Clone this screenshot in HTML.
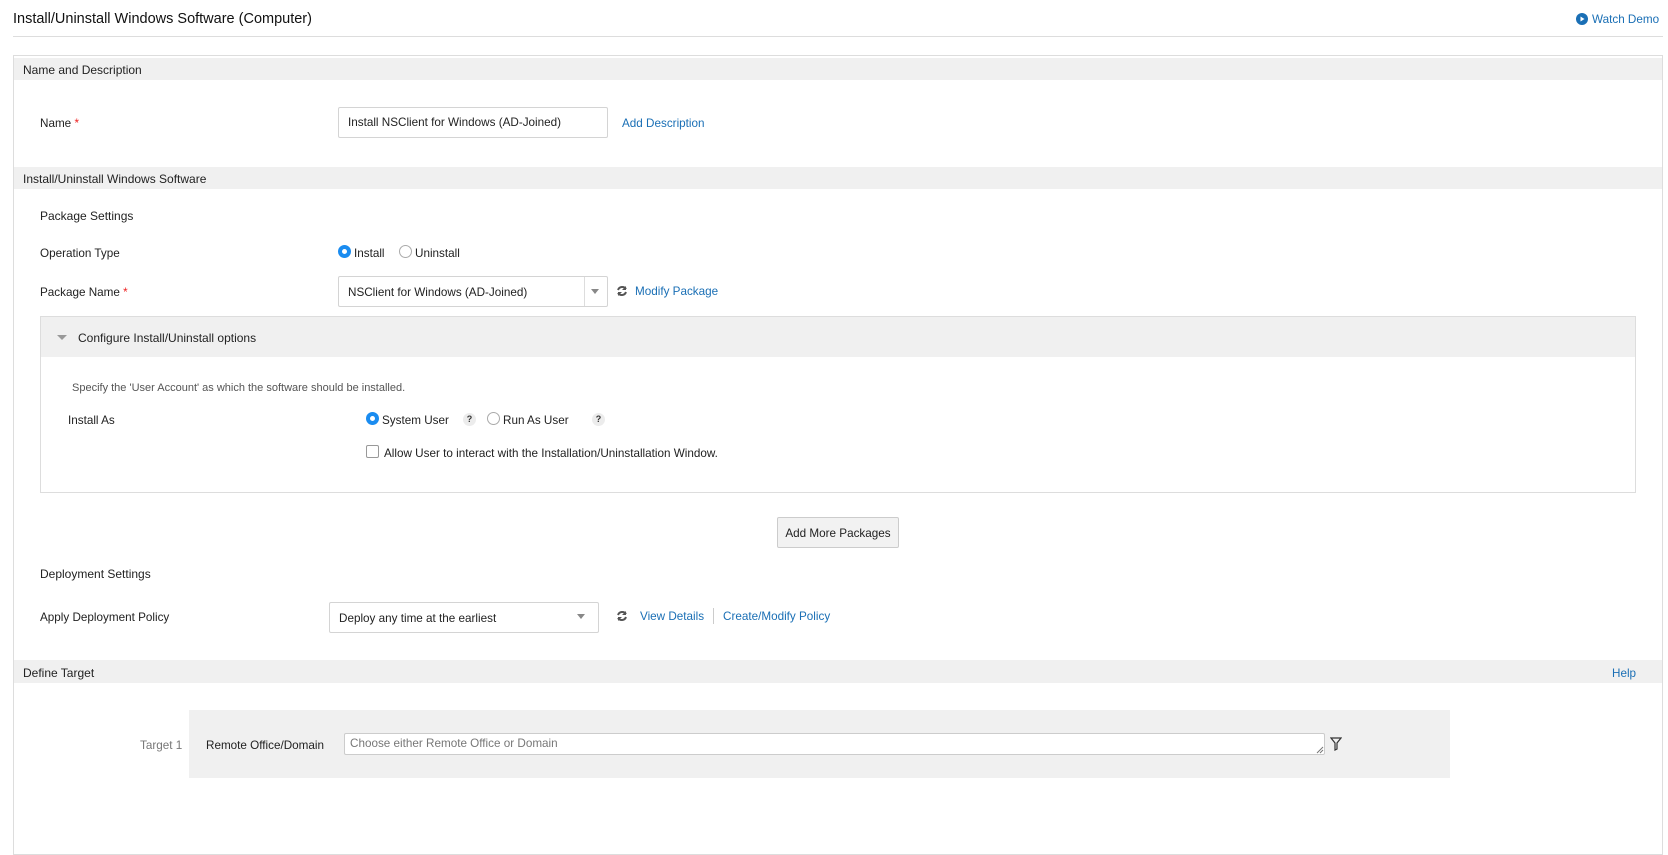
<!DOCTYPE html>
<html><head><meta charset="utf-8"><style>
*{margin:0;padding:0;box-sizing:border-box}
body{width:1668px;height:803px;overflow:hidden;background:#fff;font-family:"Liberation Sans",sans-serif;font-size:11.7px;color:#222;position:relative}
.a{position:absolute;white-space:nowrap}
.lnk{color:#1a6fb5}
.gray{background:#f0f0f0}
.inp{position:absolute;border:1px solid #d4d4d4;border-radius:2px;background:#fff}
.radio{position:absolute;width:13px;height:13px;border-radius:50%;border:1px solid #aaa;background:#fff}
.radio.on{border:4px solid #1a8cf0}
.q{position:absolute;width:13px;height:13px;border-radius:50%;background:#ececec;font-size:9px;font-weight:bold;text-align:center;line-height:13px;color:#333}
.req{color:#e22}
</style></head><body>
<div class="a" style="left:13px;top:11px;font-size:14.5px;color:#111">Install/Uninstall Windows Software (Computer)</div>
<div class="a lnk" style="left:1576px;top:13px;font-size:11.7px"><svg width="12" height="12" style="vertical-align:-2px;margin-right:4px"><circle cx="6" cy="6" r="6" fill="#1a6fb5"/><path d="M4.5 3.5 L8.5 6 L4.5 8.5Z" fill="#fff"/></svg>Watch Demo</div>
<div class="a" style="left:13px;top:36px;width:1650px;height:1px;background:#ddd"></div>

<div class="a" style="left:13px;top:55px;width:1650px;height:800px;border:1px solid #ddd"></div>
<div class="a gray" style="left:14px;top:58px;width:1648px;height:22px"></div>
<div class="a" style="left:23px;top:63px;font-size:12px">Name and Description</div>
<div class="a" style="left:40px;top:117px">Name <span class="req">*</span></div>
<div class="inp" style="left:338px;top:107px;width:270px;height:31px"></div>
<div class="a" style="left:348px;top:116px">Install NSClient for Windows (AD-Joined)</div>
<div class="a lnk" style="left:622px;top:117px">Add Description</div>

<div class="a gray" style="left:14px;top:167px;width:1648px;height:22px"></div>
<div class="a" style="left:23px;top:172px;font-size:12px">Install/Uninstall Windows Software</div>
<div class="a" style="left:40px;top:209px;font-size:12px">Package Settings</div>
<div class="a" style="left:40px;top:247px">Operation Type</div>
<div class="radio on" style="left:338px;top:245px"></div>
<div class="a" style="left:354px;top:247px">Install</div>
<div class="radio" style="left:399px;top:245px"></div>
<div class="a" style="left:415px;top:247px">Uninstall</div>

<div class="a" style="left:40px;top:286px">Package Name <span class="req">*</span></div>
<div class="inp" style="left:338px;top:276px;width:270px;height:31px"></div>
<div class="a" style="left:584px;top:277px;width:1px;height:29px;background:#ddd"></div>
<div class="a" style="left:348px;top:286px">NSClient for Windows (AD-Joined)</div>
<div class="a" style="left:591px;top:289px;width:0;height:0;border-left:4px solid transparent;border-right:4px solid transparent;border-top:5px solid #888"></div>
<svg class="a" style="left:616px;top:285px" width="12" height="12" viewBox="0 0 12 12"><path d="M10 4A4.5 4.5 0 0 0 2 5M2 8A4.5 4.5 0 0 0 10 7" stroke="#555" stroke-width="2" fill="none"/><path d="M10 1V5H6Z M2 11V7H6Z" fill="#555"/></svg>
<div class="a lnk" style="left:635px;top:285px">Modify Package</div>

<div class="a" style="left:40px;top:316px;width:1596px;height:177px;border:1px solid #ddd"></div>
<div class="a gray" style="left:41px;top:317px;width:1594px;height:40px"></div>
<div class="a" style="left:57px;top:335px;width:0;height:0;border-left:5px solid transparent;border-right:5px solid transparent;border-top:5px solid #999"></div>
<div class="a" style="left:78px;top:331px;font-size:12px">Configure Install/Uninstall options</div>
<div class="a" style="left:72px;top:382px;color:#555;font-size:11px">Specify the 'User Account' as which the software should be installed.</div>
<div class="a" style="left:68px;top:414px">Install As</div>
<div class="radio on" style="left:366px;top:412px"></div>
<div class="a" style="left:382px;top:414px">System User</div>
<div class="q" style="left:463px;top:413px">?</div>
<div class="radio" style="left:487px;top:412px"></div>
<div class="a" style="left:503px;top:414px">Run As User</div>
<div class="q" style="left:592px;top:413px">?</div>
<div class="a" style="left:366px;top:445px;width:13px;height:13px;border:1px solid #999;border-radius:2px"></div>
<div class="a" style="left:384px;top:447px">Allow User to interact with the Installation/Uninstallation Window.</div>

<div class="a" style="left:777px;top:517px;width:122px;height:31px;border:1px solid #ccc;border-radius:2px;background:#f2f2f2;text-align:center;line-height:31px">Add More Packages</div>
<div class="a" style="left:40px;top:567px;font-size:12px">Deployment Settings</div>
<div class="a" style="left:40px;top:611px">Apply Deployment Policy</div>
<div class="inp" style="left:329px;top:602px;width:270px;height:31px"></div>
<div class="a" style="left:339px;top:612px">Deploy any time at the earliest</div>
<div class="a" style="left:577px;top:614px;width:0;height:0;border-left:4px solid transparent;border-right:4px solid transparent;border-top:5px solid #888"></div>
<svg class="a" style="left:616px;top:610px" width="12" height="12" viewBox="0 0 12 12"><path d="M10 4A4.5 4.5 0 0 0 2 5M2 8A4.5 4.5 0 0 0 10 7" stroke="#555" stroke-width="2" fill="none"/><path d="M10 1V5H6Z M2 11V7H6Z" fill="#555"/></svg>
<div class="a lnk" style="left:640px;top:610px">View Details</div>
<div class="a" style="left:713px;top:608px;width:1px;height:16px;background:#ccc"></div>
<div class="a lnk" style="left:723px;top:610px">Create/Modify Policy</div>

<div class="a gray" style="left:14px;top:660px;width:1648px;height:23px"></div>
<div class="a" style="left:23px;top:666px;font-size:12px">Define Target</div>
<div class="a lnk" style="left:1612px;top:667px">Help</div>
<div class="a gray" style="left:189px;top:710px;width:1261px;height:68px"></div>
<div class="a" style="left:140px;top:739px;color:#777">Target 1</div>
<div class="a" style="left:206px;top:739px">Remote Office/Domain</div>
<div class="inp" style="left:344px;top:733px;width:981px;height:22px;border-color:#ccc"></div>
<div class="a" style="left:350px;top:737px;color:#777;font-size:11.7px">Choose either Remote Office or Domain</div>
<svg class="a" style="left:1316px;top:746px" width="8" height="8"><path d="M7 1L1 7M7 4L4 7" stroke="#777"/></svg>
<svg class="a" style="left:1330px;top:737px" width="12" height="14" viewBox="0 0 12 14"><path d="M1 1H11L7 6V12L5 13V6Z" fill="none" stroke="#333" stroke-width="1.2"/></svg>
</body></html>
